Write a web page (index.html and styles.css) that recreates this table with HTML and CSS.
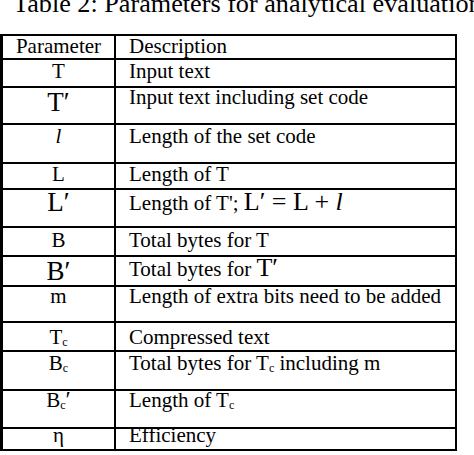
FILE: index.html
```html
<!DOCTYPE html>
<html>
<head>
<meta charset="utf-8">
<link rel="stylesheet" href="styles.css">
</head>
<body>
<div class="title">Table 2: Parameters for analytical evaluation</div>
<table class="params">
  <tr class="r-head"><td class="sym">Parameter</td><td class="desc">Description</td></tr>
  <tr class="r-t"><td class="sym">T</td><td class="desc">Input text</td></tr>
  <tr class="r-tp"><td class="sym big">T′</td><td class="desc">Input text including set code</td></tr>
  <tr class="r-l"><td class="sym"><i>l</i></td><td class="desc">Length of the set code</td></tr>
  <tr class="r-L"><td class="sym">L</td><td class="desc">Length of T</td></tr>
  <tr class="r-Lp"><td class="sym big">L′</td><td class="desc">Length of T'; <span class="bigin">L′ = L + <i>l</i></span></td></tr>
  <tr class="r-b"><td class="sym">B</td><td class="desc">Total bytes for T</td></tr>
  <tr class="r-bp"><td class="sym big">B′</td><td class="desc">Total bytes for <span class="bigin">T′</span></td></tr>
  <tr class="r-m"><td class="sym">m</td><td class="desc">Length of extra bits need to be added</td></tr>
  <tr class="r-tc"><td class="sym">T<sub>c</sub></td><td class="desc">Compressed text</td></tr>
  <tr class="r-bc"><td class="sym">B<sub>c</sub></td><td class="desc">Total bytes for T<sub>c</sub> including m</td></tr>
  <tr class="r-bcp"><td class="sym">B<sub>c</sub><span class="prime">′</span></td><td class="desc">Length of T<sub>c</sub></td></tr>
  <tr class="r-eta"><td class="sym">η</td><td class="desc">Efficiency</td></tr>
</table>
</body>
</html>
```
FILE: styles.css
```css
html, body {
  margin: 0;
  padding: 0;
  background: #fff;
  color: #000;
  font-family: "Liberation Serif", "Times New Roman", serif;
}

.title {
  font-size: 26.2px;
  line-height: 8px;
  height: 8px;
  padding-left: 13px;
  white-space: nowrap;
  overflow: visible;
}

.params {
  margin-top: 26px;
  border-collapse: separate;
  border-spacing: 0;
  border-style: solid;
  border-color: #000;
  border-width: 2px 2px 2px 3px;
  width: 457px;
  font-size: 21px;
  line-height: 16px;
}

.params td {
  padding: 0;
  vertical-align: top;
  border-bottom: 2px solid #000;
  white-space: nowrap;
}

.params tr:last-child td {
  border-bottom: none;
}

.sym {
  width: 111px;
  text-align: center;
  border-right: 2px solid #000;
}

.desc {
  padding-left: 13px !important;
}

.big {
  font-size: 27px;
}

.bigin {
  font-size: 26px;
}

sub {
  font-size: 12px;
  vertical-align: -2px;
  line-height: 0;
}

.prime {
  font-size: 24px;
  line-height: 0;
}

.r-head { height: 24px; }
.r-head td { padding-top: 2px; }

.r-t { height: 28px; }
.r-t td { padding-top: 3px; }

.r-tp { height: 37px; }
.r-tp .sym { padding-top: 6px; }
.r-tp .desc { padding-top: 1px; }

.r-l { height: 39px; }
.r-l td { padding-top: 3px; }

.r-L { height: 26px; }
.r-L td { padding-top: 2px; }

.r-Lp { height: 38px; }
.r-Lp .sym { padding-top: 4px; }
.r-Lp .desc { padding-top: 4px; }

.r-b { height: 29px; }
.r-b td { padding-top: 4px; }

.r-bp { height: 30px; }
.r-bp .sym { padding-top: 6px; }
.r-bp .desc { padding-top: 3px; }

.r-m { height: 36px; }
.r-m td { padding-top: 1px; }

.r-tc { height: 29px; }
.r-tc td { padding-top: 6px; }

.r-bc { height: 39px; }
.r-bc td { padding-top: 3px; }

.r-bcp { height: 38px; }
.r-bcp td { padding-top: 1px; }

.r-eta { height: 20px; }
.r-eta td { line-height: 12px; padding-top: 0; }
```
